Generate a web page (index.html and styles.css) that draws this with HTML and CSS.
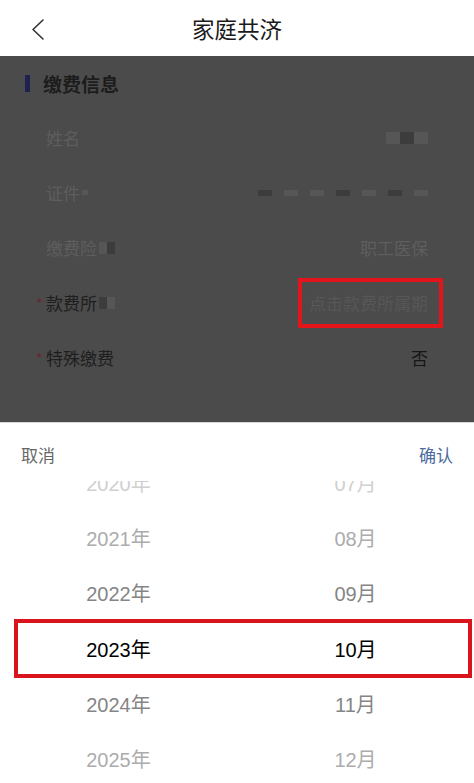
FILE: index.html
```html
<!DOCTYPE html>
<html lang="zh-CN">
<head>
  <meta charset="UTF-8" />
  <meta name="viewport" content="width=device-width, initial-scale=1.0"/>
  <title>家庭共济</title>
  <link rel="stylesheet" href="styles.css">
</head>
<body>
  <div class="header">
    <div class="back">
      <svg width="16" height="24" viewBox="0 0 16 24">
        <path d="M12 2 L2 11.5 L12 21" fill="none" stroke="#333" stroke-width="1.6" stroke-linecap="round" stroke-linejoin="round"/>
      </svg>
    </div>
    <h1 class="title">家庭共济</h1>
    <div></div>
  </div>

  <div class="content">
    <div class="section-title"><span class="bar"></span>缴费信息</div>

    <div class="row">
      <div class="label dim">姓名</div>
      <div class="value">
        <span class="mosaic m-name"><i></i><i class="dk"></i><i></i></span>
      </div>
    </div>
    <div class="row">
      <div class="label dim">证件<span class="mosaic m-tiny"><i></i></span></div>
      <div class="value">
        <span class="mosaic m-id"><i class="dk"></i><i></i><i></i><i class="dk"></i><i></i><i class="dk"></i><i></i></span>
      </div>
    </div>
    <div class="row">
      <div class="label dim">缴费险<span class="mosaic m-small"><i></i><i class="dk"></i></span></div>
      <div class="value dim">职工医保</div>
    </div>
    <div class="row">
      <div class="label"><span class="star">*</span>款费所<span class="mosaic m-small"><i class="dk"></i><i></i></span></div>
      <div class="value placeholder marked">点击款费所属期</div>
    </div>
    <div class="row">
      <div class="label"><span class="star">*</span>特殊缴费</div>
      <div class="value dark">否</div>
    </div>
  </div>

  <div class="sheet">
    <div class="toolbar">
      <span class="cancel">取消</span>
      <span class="confirm">确认</span>
    </div>
    <div class="picker">
      <div class="picker-list">
        <div class="opt far2"><span>2020年</span><span>07月</span></div>
        <div class="opt far"><span>2021年</span><span>08月</span></div>
        <div class="opt near"><span>2022年</span><span>09月</span></div>
        <div class="opt selected"><span>2023年</span><span>10月</span></div>
        <div class="opt near"><span>2024年</span><span>11月</span></div>
        <div class="opt far"><span>2025年</span><span>12月</span></div>
      </div>
    </div>
  </div>
</body>
</html>
```

FILE: styles.css
```css
body {
  margin: 0;
  font-family: "Noto Sans CJK SC", sans-serif;
  background: #fff;
  width: 474px;
  height: 783px;
  overflow: hidden;
}

.header {
  height: 56px;
  display: grid;
  grid-template-columns: 60px 1fr 60px;
  align-items: center;
  background: #fff;
}

.back {
  padding-left: 31px;
  padding-top: 3px;
  display: flex;
}

.title {
  margin: 0;
  text-align: center;
  font-size: 22.5px;
  font-weight: normal;
  color: #1a1a1a;
}

.content {
  height: 367px;
  background: #4b4b4b;
  border-bottom: 1px solid #d8d8d8;
  box-sizing: border-box;
}

.section-title {
  height: 54px;
  display: flex;
  align-items: center;
  padding-left: 25px;
  font-size: 19px;
  font-weight: bold;
  color: #1c1c1c;
}

.bar {
  width: 5px;
  height: 17px;
  background: #1f2250;
  margin-right: 13px;
}

.row {
  height: 55px;
  display: flex;
  justify-content: space-between;
  align-items: center;
  padding: 0 46px;
  font-size: 17px;
}

.label {
  display: flex;
  align-items: center;
  color: #1e1e1e;
}

.dim {
  color: #5e5e5e;
}

.star {
  color: #6e2433;
  font-size: 14px;
  width: 10px;
  margin-left: -10px;
}

.value {
  display: flex;
  align-items: center;
}

.dark {
  color: #161616;
}

.placeholder {
  color: #575757;
}

.marked {
  position: relative;
}

.marked::after {
  content: "";
  position: absolute;
  top: -12px;
  bottom: -13px;
  left: -11px;
  right: -15px;
  border: 4px solid #e4141b;
}

.mosaic {
  display: inline-flex;
  align-items: center;
  gap: 3px;
}

.mosaic i {
  display: inline-block;
  width: 10px;
  height: 8px;
  background: #565656;
}

.mosaic i.dk {
  background: #3c3c3c;
}

.m-name {
  gap: 0;
}

.m-name i {
  width: 14px;
  height: 12px;
}

.m-tiny {
  margin-left: 2px;
}

.m-tiny i {
  width: 6px;
  height: 5px;
}

.m-id {
  gap: 12px;
}

.m-id i {
  width: 14px;
  height: 6px;
}

.m-small {
  margin-left: 2px;
  gap: 0;
}

.m-small i {
  width: 8px;
  height: 12px;
}

.sheet {
  height: 360px;
  background: #fff;
}

.toolbar {
  height: 58px;
  box-sizing: border-box;
  padding: 4px 21px 0;
  display: flex;
  justify-content: space-between;
  align-items: center;
  font-size: 17px;
}

.cancel {
  color: #666;
}

.confirm {
  color: #4a6b9e;
}

.picker {
  height: 302px;
  overflow: hidden;
}

.picker-list {
  margin-top: -26px;
}

.opt {
  height: 55.2px;
  display: grid;
  grid-template-columns: 1fr 1fr;
  align-items: center;
  text-align: center;
  font-family: "Liberation Sans", "Noto Sans CJK SC", sans-serif;
  font-size: 20px;
}

.far2 {
  color: #d0d0d0;
}

.far {
  color: #acacac;
}

.near {
  color: #858585;
}

.selected {
  color: #000;
  position: relative;
}

.selected::after {
  content: "";
  position: absolute;
  top: -2px;
  bottom: -2px;
  left: 14px;
  right: 2px;
  border: 4px solid #d9141c;
}
```
